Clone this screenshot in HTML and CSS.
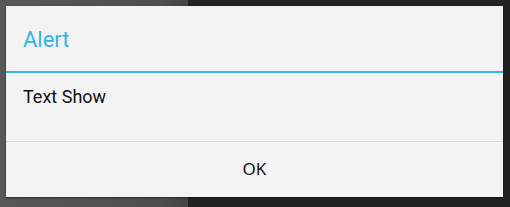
FILE: index.html
```html
<!DOCTYPE html>
<html lang="en">
<head>
    <meta charset="UTF-8">
    <title>Alert</title>
    <link rel="stylesheet" href="styles.css">
</head>
<body>
    <div class="dialog">
        <div class="dialog-title">Alert</div>
        <div class="dialog-body">Text Show</div>
        <div class="dialog-buttons">
            <button class="dialog-btn">OK</button>
        </div>
    </div>
</body>
</html>
```

FILE: styles.css
```css
html, body { margin: 0; padding: 0; }
body {
    width: 510px;
    height: 207px;
    overflow: hidden;
    background: linear-gradient(to right, #585858 0, #4e4e4e 160px, #444 188px, #222 188px, #222 100%);
    font-family: Roboto, "Noto Sans", sans-serif;
}

.dialog {
    margin: 6px 0 0 6px;
    width: 497px;
    height: 191px;
    background-color: #f3f3f3;
    box-shadow: 0 1px 2px rgba(0, 0, 0, 0.5);
    display: flex;
    flex-direction: column;
}

.dialog-title {
    height: 65px;
    padding-left: 17px;
    display: flex;
    align-items: center;
    color: #33b5e5;
    font-size: 22px;
    border-bottom: 2px solid #33b5e5;
    box-sizing: border-box;
    height: 67px;
    padding-top: 2px;
}

.dialog-body {
    height: 68px;
    box-sizing: border-box;
    padding: 15px 0 0 17px;
    font-size: 18px;
    line-height: 18px;
    color: #111;
    border-bottom: 1px solid #d8d8d8;
    height: 69px;
}

.dialog-buttons {
    flex: 1;
    display: flex;
}

.dialog-btn {
    flex: 1;
    border: none;
    background: transparent;
    font-family: "Noto Sans", sans-serif;
    font-size: 17px;
    color: #111;
    padding: 0 0 2px 0;
}
```
